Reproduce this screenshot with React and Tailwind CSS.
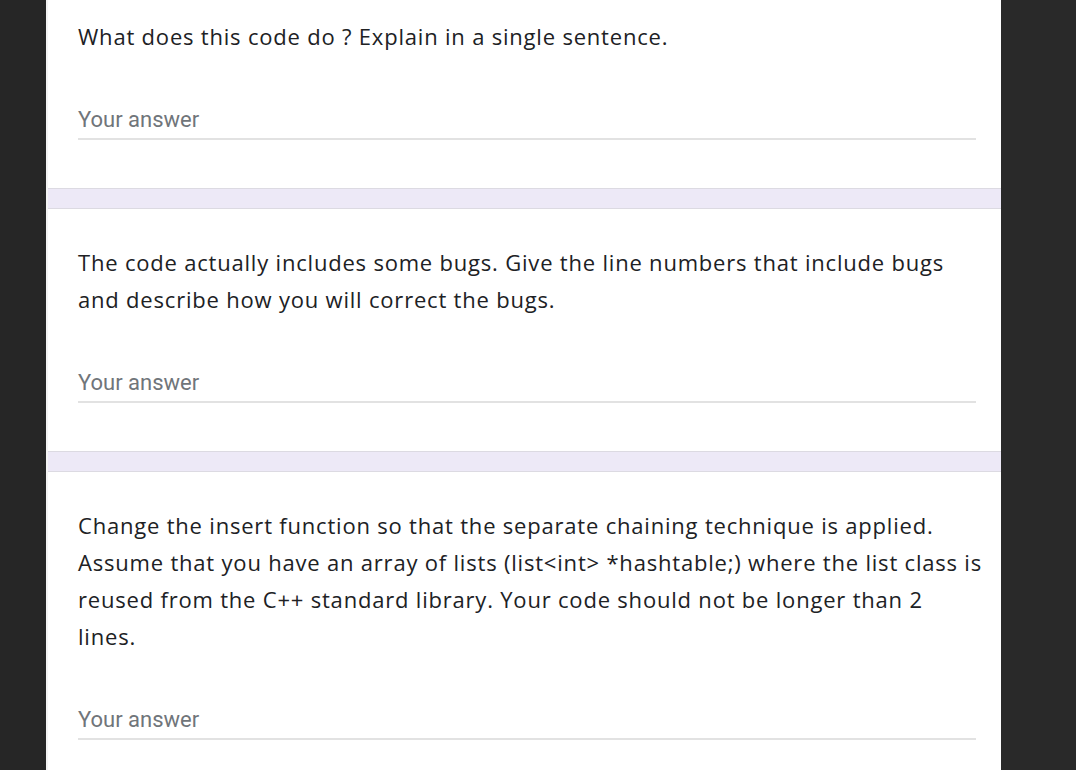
const questions = [
  ["What does this code do ? Explain in a single sentence."],
  [
    "The code actually includes some bugs. Give the line numbers that include bugs",
    "and describe how you will correct the bugs.",
  ],
  [
    "Change the insert function so that the separate chaining technique is applied.",
    "Assume that you have an array of lists (list<int> *hashtable;) where the list class is",
    "reused from the C++ standard library. Your code should not be longer than 2",
    "lines.",
  ],
];

function Question({ lines, first }) {
  return (
    <div className={`bg-white pl-[30px] pr-[25px] pb-[48px] ${first ? "pt-[18px]" : "pt-[35px]"}`}>
      <div className="font-['Open_Sans',sans-serif] text-[22px] tracking-[0.8px] leading-[37px] text-[#202124]">
        {lines.map((l) => (
          <div key={l} className="whitespace-nowrap">{l}</div>
        ))}
      </div>
      <div className="mt-[53px]">
        <div className="font-['Roboto',sans-serif] text-[22px] leading-[24px] text-[#70757a]">
          Your answer
        </div>
        <div className="mt-[6px] h-[2px] bg-[#e2e2e2]" />
      </div>
    </div>
  );
}

export default function App() {
  return (
    <div className="w-[1076px] h-[770px] overflow-hidden flex bg-[#252525]">
      <div className="w-[46px] bg-[#262626]" />
      <div className="w-[2px] bg-[#f4f4f4]" />
      <div className="w-[953px] flex flex-col">
        {questions.map((lines, i) => (
          <div key={i}>
            {i > 0 && (
              <div className="h-[21px] bg-[#ede9f7] border-y border-[#dcdae2]" />
            )}
            <Question lines={lines} first={i === 0} />
          </div>
        ))}
      </div>
      <div className="flex-1 bg-[#292929]" />
    </div>
  );
}
